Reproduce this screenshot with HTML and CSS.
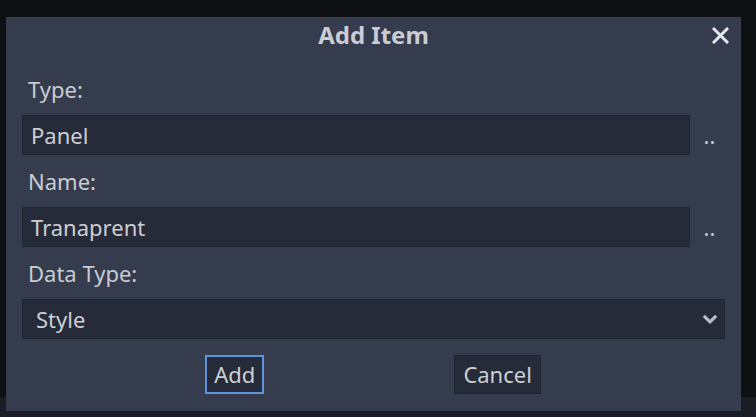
FILE: index.html
```html
<!DOCTYPE html>
<html>
<head>
<meta charset="utf-8">
<link rel="stylesheet" href="styles.css">
</head>
<body>
<div class="editor">
  <div class="editor-main"></div>
  <div class="editor-bottom"></div>
</div>
<div class="dialog">
  <div class="title">Add Item</div>
  <svg class="close" width="17" height="17" viewBox="0 0 17 17"><path d="M2 2 L15 15 M15 2 L2 15" stroke="#e6e7ea" stroke-width="3" stroke-linecap="square"/></svg>
  <div class="content">
    <div class="label">Type:</div>
    <div class="field-row">
      <div class="field">Panel</div>
      <div class="dots">..</div>
    </div>
    <div class="label">Name:</div>
    <div class="field-row">
      <div class="field">Tranaprent</div>
      <div class="dots">..</div>
    </div>
    <div class="label">Data Type:</div>
    <div class="select">
      <span>Style</span>
      <svg class="chev" width="16" height="10" viewBox="0 0 16 10"><path d="M1.8 1.8 L8 7.8 L14.2 1.8" fill="none" stroke="#b9bdc5" stroke-width="3.2"/></svg>
    </div>
    <div class="buttons">
      <div class="sp sp-l"></div>
      <div class="btn btn-focus">Add</div>
      <div class="sp sp-m"></div>
      <div class="btn">Cancel</div>
      <div class="sp sp-r"></div>
    </div>
  </div>
</div>
</body>
</html>
```

FILE: styles.css
```css
html, body {
  margin: 0;
  padding: 0;
}
body {
  width: 756px;
  height: 417px;
  overflow: hidden;
  position: relative;
  background: #0f1012;
  font-family: "Noto Sans", "Open Sans", sans-serif;
  font-size: 22px;
  color: #cdcfd3;
}
.editor {
  display: flex;
  flex-direction: column;
  height: 417px;
}
.editor-main {
  flex: 1;
  background: #0f1012;
}
.editor-bottom {
  height: 20px;
  background: #1a1d25;
}
.dialog {
  position: absolute;
  left: 6px;
  top: 17px;
  width: 735px;
  height: 394px;
  box-sizing: border-box;
  background: #353c4e;
  padding: 0 16px 17px;
  display: flex;
  flex-direction: column;
}
.title {
  height: 34px;
  line-height: 36px;
  text-align: center;
  font-weight: bold;
  font-size: 24px;
  color: #c9ccd4;
}
.close {
  position: absolute;
  right: 12px;
  top: 10px;
}
.content {
  margin-top: 18px;
  display: flex;
  flex-direction: column;
  gap: 6px;
}
.label {
  height: 40px;
  line-height: 40px;
  padding-left: 6px;
  color: #c9ccd1;
}
.field-row {
  display: flex;
  gap: 4px;
  height: 40px;
}
.field {
  flex: 1;
  box-sizing: border-box;
  height: 40px;
  line-height: 38px;
  border: 1px solid #20242e;
  background: #262b39;
  padding-left: 8px;
}
.dots {
  width: 31px;
  line-height: 40px;
  text-align: center;
  color: #c3c7ce;
}
.select {
  box-sizing: border-box;
  height: 40px;
  line-height: 38px;
  border: 1px solid #20242e;
  background: #262b39;
  padding-left: 13px;
  padding-right: 6px;
  display: flex;
  justify-content: space-between;
  align-items: center;
}
.buttons {
  margin-top: 10px;
  display: flex;
  height: 39px;
}
.sp-l { flex: 184 1 0; }
.sp-m { flex: 191 1 0; }
.sp-r { flex: 185 1 0; }
.btn {
  box-sizing: border-box;
  height: 39px;
  line-height: 37px;
  padding: 0 8px;
  background: #262b39;
  border: 1px solid #20242e;
  color: #cdcfd3;
}
.btn-focus {
  border: 2px solid #5f93e0;
  line-height: 35px;
  padding: 0 7px;
}
```
